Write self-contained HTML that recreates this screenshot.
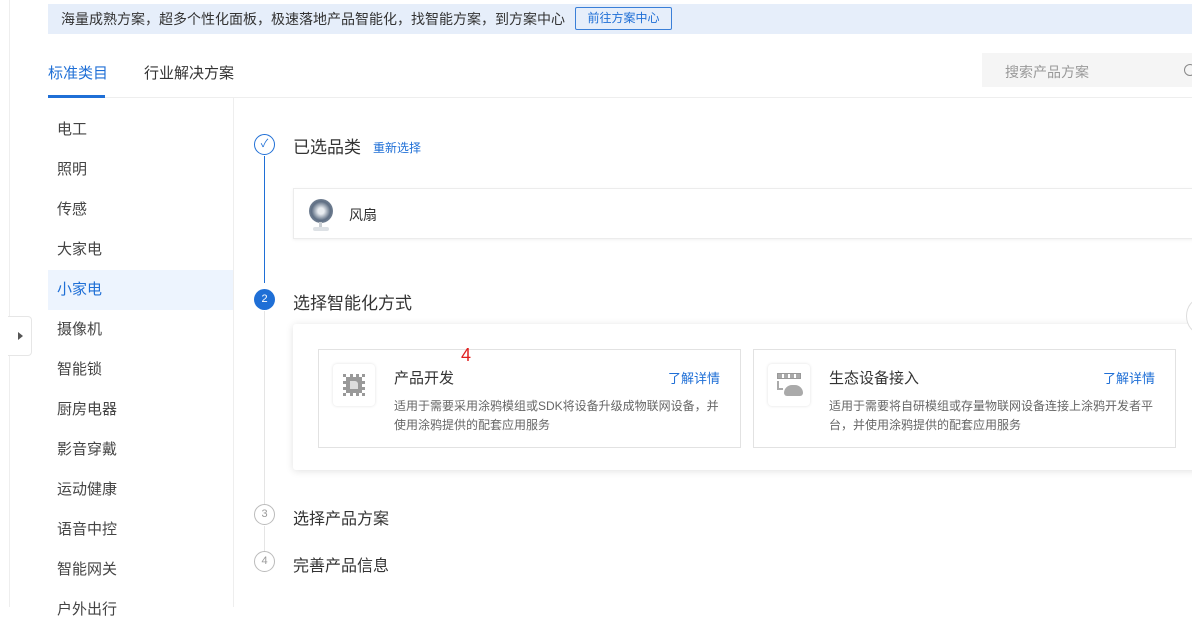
<!DOCTYPE html>
<html><head><meta charset="utf-8"><style>
*{margin:0;padding:0;box-sizing:border-box}
body{width:1192px;height:607px;overflow:hidden;background:#fff;font-family:"Liberation Sans","Noto Sans CJK SC",sans-serif;position:relative;color:#333}
.a{position:absolute}
.side div{position:absolute;left:0;width:185px;height:40px;line-height:40px;padding-left:9px;font-size:15px;color:#444}
.circ{position:absolute;width:21px;height:21px;border-radius:50%;text-align:center;line-height:19px;font-size:11px}
.card{position:absolute;border:1px solid #e2e2e2;background:#fff}
.ic{position:absolute;left:14px;top:14px;width:42px;height:42px;border-radius:4px;box-shadow:0 0 3px rgba(0,0,0,.12);background:#fff}
.t{position:absolute;left:75px;top:17px;font-size:15px;color:#333}
.l{position:absolute;right:20px;top:18px;font-size:13px;color:#1f6fd6}
.d{position:absolute;left:75px;top:47px;width:330px;font-size:12px;line-height:19px;color:#666}
</style></head><body>
<div class="a" style="left:9px;top:0;width:1px;height:607px;background:#eee"></div>
<div class="a" style="left:48px;top:4px;width:1144px;height:30px;background:#e6eefa"></div>
<div class="a" style="left:61px;top:9px;font-size:14px;color:#333">海量成熟方案，超多个性化面板，极速落地产品智能化，找智能方案，到方案中心</div>
<div class="a" style="left:575px;top:7px;width:97px;height:23px;border:1px solid #3a7fd8;border-radius:2px;color:#1f6fd6;font-size:12px;text-align:center;line-height:21px">前往方案中心</div>
<div class="a" style="left:48px;top:62px;font-size:15px;color:#1f6fd6">标准类目</div>
<div class="a" style="left:144px;top:62px;font-size:15px;color:#333">行业解决方案</div>
<div class="a" style="left:48px;top:95px;width:57px;height:3px;background:#1f6fd6"></div>
<div class="a" style="left:105px;top:97px;width:1087px;height:1px;background:#eee"></div>
<div class="a" style="left:982px;top:53px;width:210px;height:34px;background:#f5f5f5"></div>
<div class="a" style="left:1005px;top:62px;font-size:14px;color:#999">搜索产品方案</div>
<div class="a" style="left:1184px;top:64px;width:12px;height:12px;border:1.5px solid #888;border-radius:50%"></div>
<div class="a" style="left:233px;top:97px;width:1px;height:510px;background:#eee"></div>
<div class="side a" style="left:48px;top:0">
<div style="top:110px">电工</div><div style="top:150px">照明</div><div style="top:190px">传感</div><div style="top:230px">大家电</div>
<div style="top:270px;background:#edf4fe;color:#1f6fd6">小家电</div><div style="top:310px">摄像机</div><div style="top:350px">智能锁</div>
<div style="top:390px">厨房电器</div><div style="top:430px">影音穿戴</div><div style="top:470px">运动健康</div><div style="top:510px">语音中控</div>
<div style="top:550px">智能网关</div><div style="top:590px">户外出行</div></div>
<div class="a" style="left:8px;top:316px;width:24px;height:40px;border:1px solid #e6e6e6;border-left:none;border-radius:0 4px 4px 0;background:#fff"></div>
<div class="a" style="left:18px;top:332px;border-left:5px solid #555;border-top:4px solid transparent;border-bottom:4px solid transparent"></div>
<div class="circ" style="left:254px;top:134px;border:1px solid #1f6fd6;color:#1f6fd6">✓</div>
<div class="a" style="left:264px;top:156px;width:1px;height:127px;background:#1f6fd6"></div>
<div class="a" style="left:293px;top:133px;font-size:17px;color:#333">已选品类</div>
<div class="a" style="left:373px;top:139px;font-size:12px;color:#1f6fd6">重新选择</div>
<div class="card" style="left:293px;top:188px;width:910px;height:51px;border-color:#ececec;box-shadow:0 1px 3px rgba(0,0,0,.06)"></div>
<div class="a" style="left:309px;top:199px;width:24px;height:24px;border-radius:50%;background:radial-gradient(circle,#e8ecf0 18%,#5f6f84 55%,#8e9aa8 100%)"></div>
<div class="a" style="left:319px;top:222px;width:3px;height:6px;background:#c8cdd2"></div>
<div class="a" style="left:313px;top:227px;width:16px;height:4px;border-radius:2px;background:#dde1e5"></div>
<div class="a" style="left:349px;top:205px;font-size:14px;color:#333">风扇</div>
<div class="circ" style="left:254px;top:289px;background:#1f6fd6;color:#fff;line-height:21px">2</div>
<div class="a" style="left:264px;top:311px;width:1px;height:194px;background:#e5e5e5"></div>
<div class="a" style="left:293px;top:289px;font-size:17px;color:#333">选择智能化方式</div>
<div class="a" style="left:293px;top:324px;width:910px;height:146px;background:#fff;box-shadow:0 1px 8px rgba(0,0,0,.12);border-radius:3px"></div>
<div class="card" style="left:318px;top:349px;width:423px;height:99px">
<div class="ic"><div class="a" style="left:10px;top:10px;width:22px;height:22px;border:3px dotted #999"></div><div class="a" style="left:13px;top:13px;width:16px;height:16px;background:#999"></div><div class="a" style="left:17px;top:17px;width:8px;height:8px;background:#ddd;border-radius:0 3px 0 0"></div></div>
<div class="t">产品开发</div><div class="l">了解详情</div>
<div class="d">适用于需要采用涂鸦模组或SDK将设备升级成物联网设备，并使用涂鸦提供的配套应用服务</div></div>
<div class="a" style="left:461px;top:345px;font-size:18px;color:#e02020">4</div>
<div class="card" style="left:753px;top:349px;width:423px;height:99px">
<div class="ic"><div class="a" style="left:9px;top:9px;width:24px;height:6px;border:1.5px solid #999;background:repeating-linear-gradient(90deg,#aaa 0 4px,#fff 4px 6px)"></div><div class="a" style="left:9px;top:17px;width:2px;height:8px;background:#aaa"></div><div class="a" style="left:9px;top:24px;width:6px;height:2px;background:#aaa"></div><div class="a" style="left:16px;top:21px;width:19px;height:11px;border-radius:8px 8px 3px 3px;background:#aaa"></div></div>
<div class="t">生态设备接入</div><div class="l">了解详情</div>
<div class="d">适用于需要将自研模组或存量物联网设备连接上涂鸦开发者平台，并使用涂鸦提供的配套应用服务</div></div>
<div class="a" style="left:1186px;top:298px;width:30px;height:36px;border-radius:50%;border:1px solid #ddd;background:#fff"></div>
<div class="circ" style="left:254px;top:504px;border:1px solid #bbb;color:#999">3</div>
<div class="a" style="left:264px;top:526px;width:1px;height:25px;background:#e5e5e5"></div>
<div class="a" style="left:293px;top:505px;font-size:16px;color:#333">选择产品方案</div>
<div class="circ" style="left:254px;top:551px;border:1px solid #bbb;color:#999">4</div>
<div class="a" style="left:293px;top:552px;font-size:16px;color:#333">完善产品信息</div>
</body></html>
